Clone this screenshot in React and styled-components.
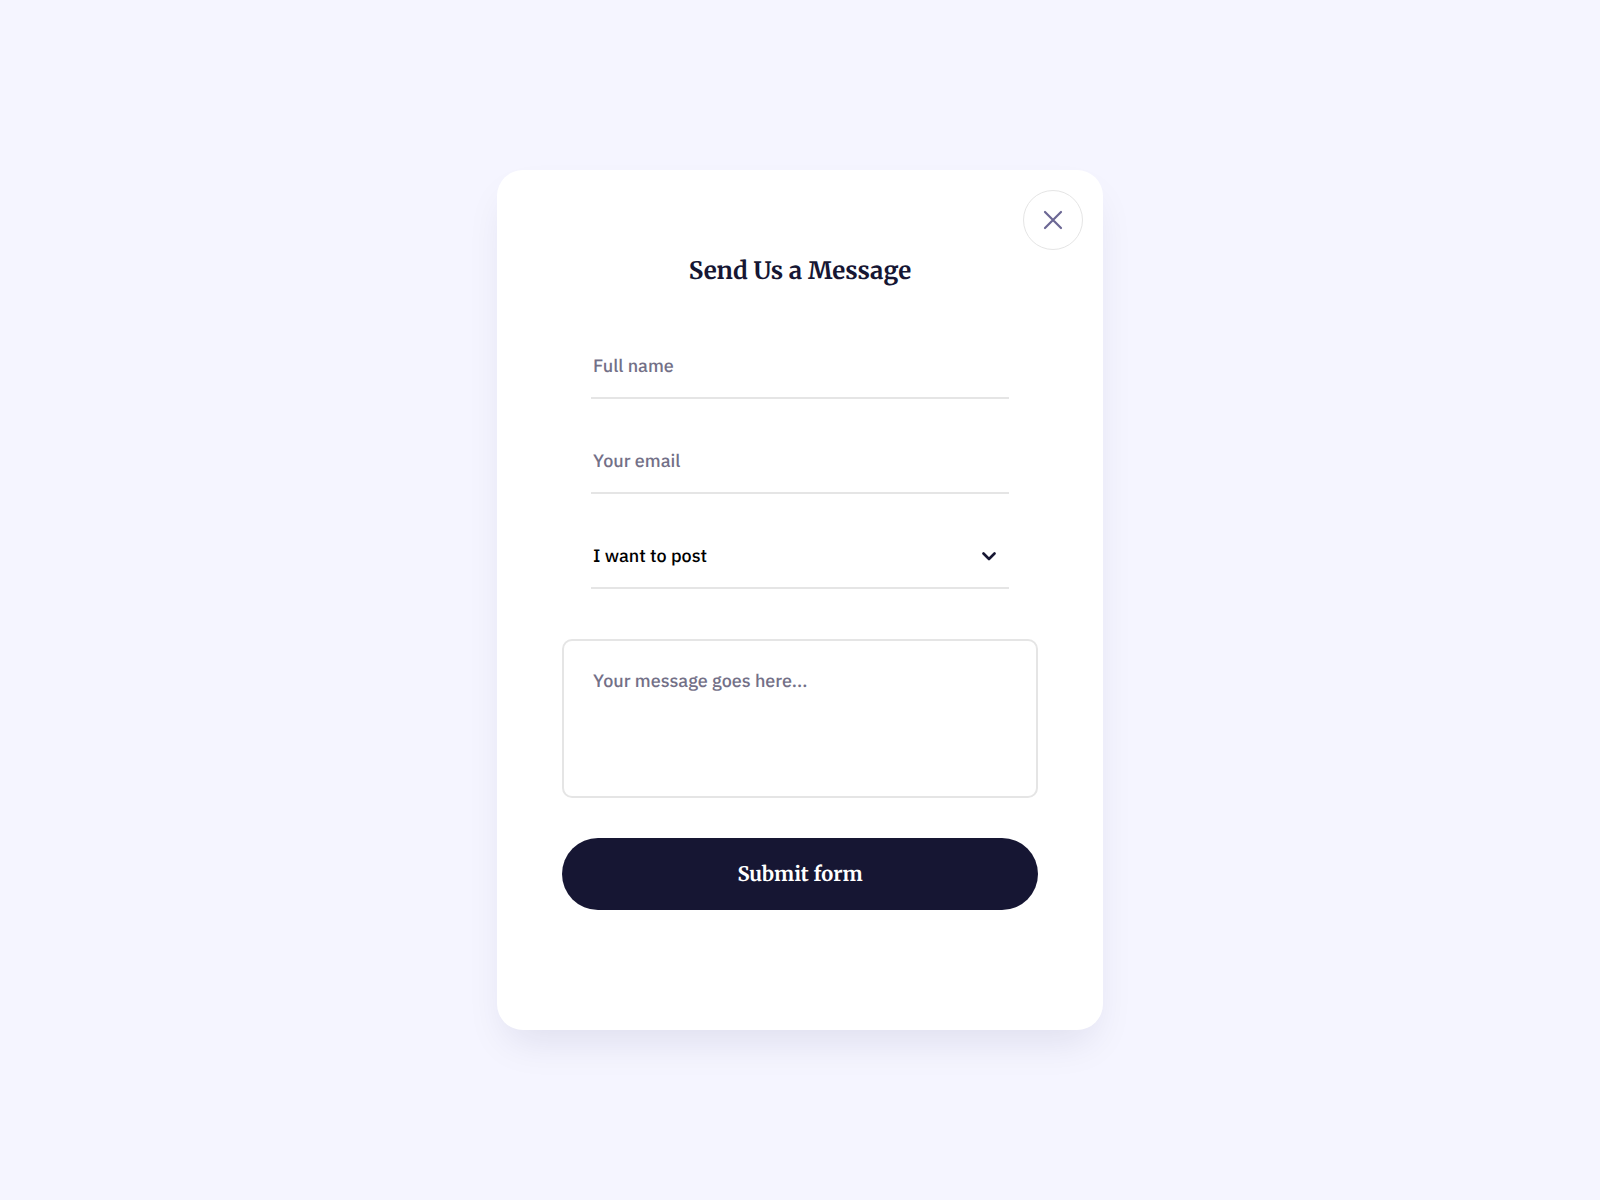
import React from 'react';
import styled, { createGlobalStyle, ThemeProvider } from 'styled-components';

const theme = {
  colors: {
    page: '#f5f5ff',
    surface: '#ffffff',
    primary: '#161633',
    border: '#e5e5e5',
    placeholder: '#737087',
    icon: '#6b6794',
  },
  fonts: {
    heading: "Merriweather, 'DejaVu Serif Condensed', 'DejaVu Serif', serif",
    body: "'IBM Plex Sans', Roboto, sans-serif",
  },
};

const GlobalStyle = createGlobalStyle`
  *, *::before, *::after {
    box-sizing: border-box;
  }

  body {
    margin: 0;
    background: ${({ theme }) => theme.colors.page};
    text-rendering: geometricPrecision;
  }
`;

const Page = styled.main`
  display: flex;
  align-items: center;
  justify-content: center;
  min-height: 100vh;
  padding: 24px;
`;

const Card = styled.section`
  position: relative;
  width: 100%;
  max-width: 606px;
  padding: 80px 65px 120px;
  background: ${({ theme }) => theme.colors.surface};
  border-radius: 26px;
  box-shadow: 0 20px 40px -10px rgba(22, 16, 80, 0.1);
`;

const CloseButton = styled.button`
  position: absolute;
  top: 20px;
  right: 20px;
  display: flex;
  align-items: center;
  justify-content: center;
  width: 60px;
  height: 60px;
  padding: 0;
  color: ${({ theme }) => theme.colors.icon};
  background: none;
  border: 1px solid ${({ theme }) => theme.colors.border};
  border-radius: 50%;
  cursor: pointer;
`;

const Title = styled.h2`
  margin: 0 0 41px;
  font-family: ${({ theme }) => theme.fonts.heading};
  font-size: 24px;
  font-weight: 700;
  line-height: 42px;
  text-align: center;
  color: ${({ theme }) => theme.colors.primary};
`;

const Form = styled.form`
  display: flex;
  flex-direction: column;
  gap: 40px;
`;

const Fields = styled.div`
  display: flex;
  flex-direction: column;
  gap: 29px;
  margin: 0 29px 10px;
`;

const Input = styled.input`
  display: block;
  width: 100%;
  height: 66px;
  padding: 0 2px;
  font-family: ${({ theme }) => theme.fonts.body};
  font-size: 18px;
  font-weight: 500;
  text-rendering: inherit;
  color: #000;
  background: transparent;
  border: 0;
  border-bottom: 2px solid ${({ theme }) => theme.colors.border};
  border-radius: 0;
  outline: none;

  &::placeholder {
    color: ${({ theme }) => theme.colors.placeholder};
    opacity: 1;
  }

  &:focus {
    border-color: ${({ theme }) => theme.colors.primary};
  }
`;

const SelectWrapper = styled.div`
  position: relative;
`;

const Select = styled(Input).attrs({ as: 'select' })`
  padding-right: 40px;
  appearance: none;
  cursor: pointer;
`;

const Chevron = styled.svg`
  position: absolute;
  top: 29px;
  right: 13px;
  color: ${({ theme }) => theme.colors.primary};
  pointer-events: none;
`;

const Message = styled(Input).attrs({ as: 'textarea' })`
  height: 159px;
  padding: 26px 29px;
  line-height: 28px;
  border: 2px solid ${({ theme }) => theme.colors.border};
  border-radius: 10px;
  resize: none;
`;

const SubmitButton = styled.button`
  height: 72px;
  padding: 0 24px;
  font-family: ${({ theme }) => theme.fonts.heading};
  font-size: 20px;
  font-weight: 700;
  text-rendering: inherit;
  color: #fff;
  background: ${({ theme }) => theme.colors.primary};
  border: 0;
  border-radius: 36px;
  cursor: pointer;
`;

const App = () => {
  const handleSubmit = event => event.preventDefault();

  return (
    <ThemeProvider theme={theme}>
      <GlobalStyle />
      <Page>
        <Card>
          <CloseButton type="button" aria-label="Close">
            <svg width="20" height="20" viewBox="0 0 20 20" fill="none" stroke="currentColor" strokeWidth="2.2" strokeLinecap="round">
              <path d="M2 2l16 16M18 2L2 18" />
            </svg>
          </CloseButton>
          <Title>Send Us a Message</Title>
          <Form onSubmit={handleSubmit}>
            <Fields>
              <Input type="text" name="name" aria-label="Full name" placeholder="Full name" />
              <Input type="email" name="email" aria-label="Your email" placeholder="Your email" />
              <SelectWrapper>
                <Select name="subject" aria-label="Subject">
                  <option>I want to post</option>
                </Select>
                <Chevron width="14" height="9" viewBox="0 0 14 9" fill="none" stroke="currentColor" strokeWidth="2.6" strokeLinecap="round" strokeLinejoin="round">
                  <path d="M1.500 1.500L7 7l5.500-5.500" />
                </Chevron>
              </SelectWrapper>
            </Fields>
            <Message name="message" aria-label="Message" placeholder="Your message goes here..." />
            <SubmitButton type="submit">Submit form</SubmitButton>
          </Form>
        </Card>
      </Page>
    </ThemeProvider>
  );
};

export default App;
